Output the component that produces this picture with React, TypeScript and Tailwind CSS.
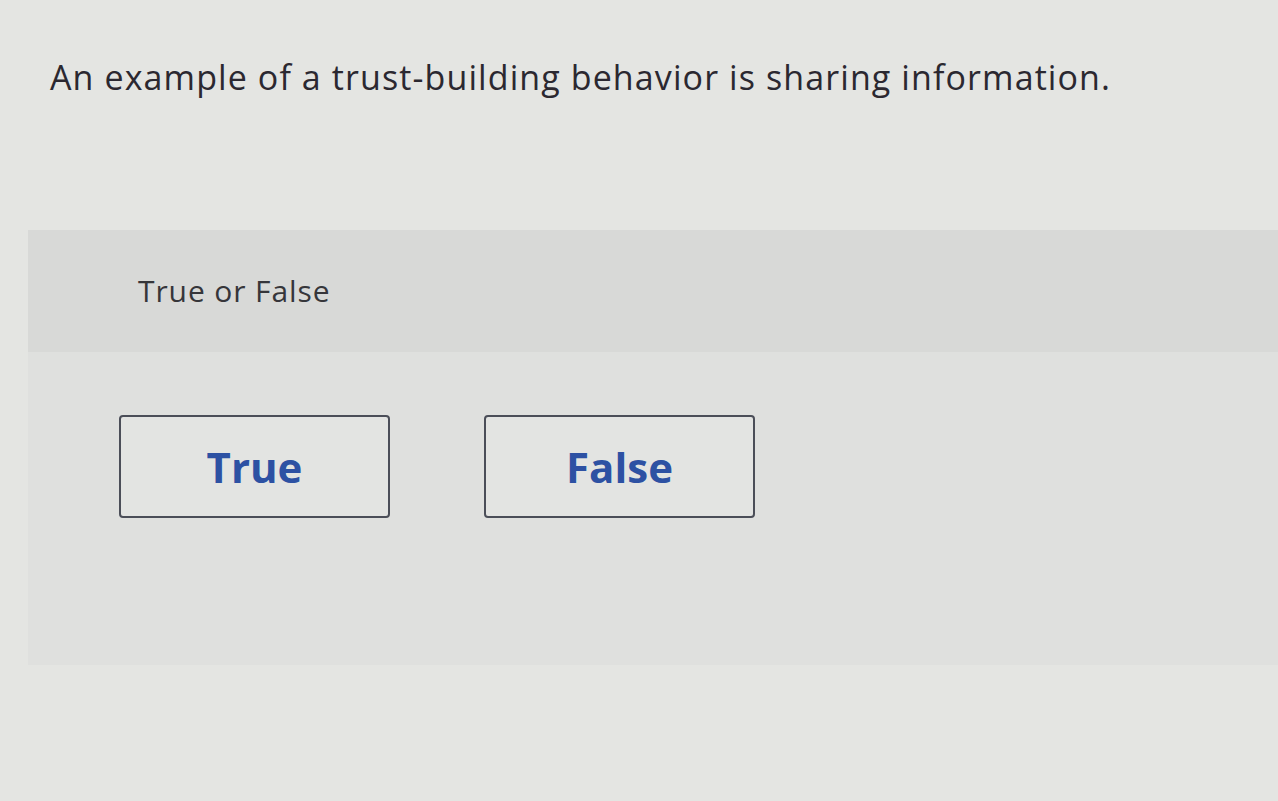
import { useState } from 'react';

// True/false quiz card
export default function App() {
    const [picked, setPicked] = useState<string | null>(null);
    const choices = ['True', 'False'];

    return (
        <div className="min-h-[801px] w-full bg-[#e4e5e2] font-['Open_Sans',sans-serif] overflow-hidden">
            <div className="pl-[50px] pt-[55px] h-[230px]">
                <h1 className="text-[34px] leading-[44px] text-[#2b2830] font-normal tracking-[1.1px] whitespace-nowrap">
                    An example of a trust-building behavior is sharing information.
                </h1>
            </div>

            <div className="ml-[28px] bg-[#dfe0de]">
                {/* Question type header */}
                <div className="h-[122px] bg-[#d8d9d7] pl-[110px] pt-[42px]">
                    <p className="text-[30px] leading-[38px] text-[#36363a] tracking-[0.9px]">True or False</p>
                </div>

                {/* Answer buttons */}
                <div className="h-[313px] pl-[91px] pt-[63px] flex gap-[94px] items-start">
                    {choices.map((c) => (
                        <button
                            key={c}
                            onClick={() => setPicked(c)}
                            className={`w-[271px] h-[103px] rounded-[4px] border-2 border-[#4b4e58] bg-[#e3e4e2] flex items-center justify-center text-[42px] font-bold text-[#2d51a3] ${picked === c ? 'bg-[#d6dcea]' : ''}`}
                        >
                            {c}
                        </button>
                    ))}
                </div>
            </div>
        </div>
    );
}
